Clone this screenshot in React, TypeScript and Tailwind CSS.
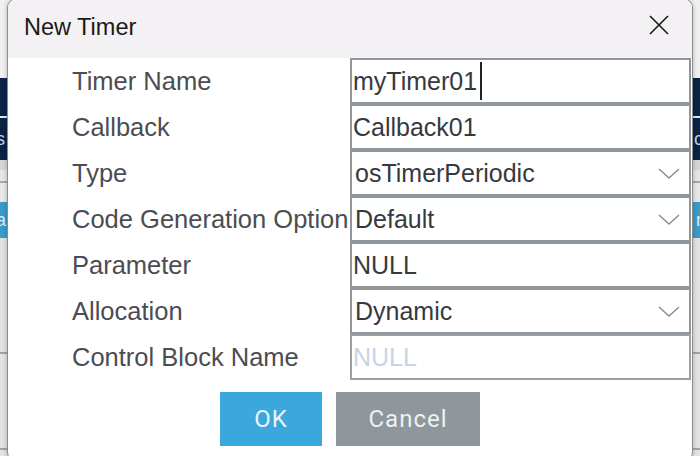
type Row = {
  label: string;
  value: string;
  select?: boolean;
  caret?: boolean;
  placeholder?: boolean;
};

const rows: Row[] = [
  { label: "Timer Name", value: "myTimer01", caret: true },
  { label: "Callback", value: "Callback01" },
  { label: "Type", value: "osTimerPeriodic", select: true },
  { label: "Code Generation Option", value: "Default", select: true },
  { label: "Parameter", value: "NULL" },
  { label: "Allocation", value: "Dynamic", select: true },
  { label: "Control Block Name", value: "NULL", placeholder: true },
];

function Backdrop() {
  // strips of the main window peeking out on both sides of the dialog
  return (
    <div className="flex flex-col h-[456px] w-[700px] bg-[#e9e9e9]">
      <div className="h-[78px] bg-[#f1f1f1]" />
      <div className="h-[38px] bg-[#0b2346]" />
      <div className="h-[2px] bg-[#dfe5ec]" />
      <div className="h-[42px] bg-[#0b2346] flex items-center justify-between text-[18px] text-[#c9d2de] font-['Liberation_Sans',Arial,sans-serif]">
        <span className="-ml-[4px]">s</span>
        <span className="-mr-[3px]">c</span>
      </div>
      <div className="h-[10px] bg-[#d5d5d5]" />
      <div className="h-[11px] bg-[#e6e6e6]" />
      <div className="h-[2px] bg-[#a9a9a9]" />
      <div className="h-[19px] bg-[#e8e8e8]" />
      <div className="h-[36px] bg-[#3a9ccb] flex items-center justify-between text-[18px] text-[#d8ecf6] font-['Liberation_Sans',Arial,sans-serif]">
        <span className="-ml-[4px]">a</span>
        <span className="-mr-[2px]">r</span>
      </div>
      <div className="h-[114px] bg-[#e3e3e3]" />
      <div className="h-[2px] bg-[#a3a3a3]" />
      <div className="h-[94px] bg-[#e3e3e3]" />
      <div className="h-[2px] bg-[#a3a3a3]" />
      <div className="flex-1 bg-[#e3e3e3]" />
    </div>
  );
}

function Chevron() {
  return (
    <svg width="22" height="11" viewBox="0 0 22 11" className="ml-auto" fill="none">
      <polyline points="1,1 11,10 21,1" stroke="#868b90" strokeWidth="1.4" />
    </svg>
  );
}

function Field({ row }: { row: Row }) {
  return (
    <div
      className={
        "h-[46px] flex items-center border-2 bg-white pr-[9px] " +
        (row.select ? "pl-[3px] " : "pl-[1px] ") +
        (row.placeholder ? "border-[#9aa0a5]" : "border-[#8f969c]")
      }
    >
      <span
        className={
          "text-[25px] leading-none " +
          (row.placeholder ? "text-[#c6d4e9]" : "text-[#363a40]")
        }
      >
        {row.value}
      </span>
      {row.caret && <span className="ml-[3px] w-[2px] h-[38px] bg-[#222]" />}
      {row.select && <Chevron />}
    </div>
  );
}

export default function App() {
  return (
    <div className="relative w-[700px] h-[456px] overflow-hidden font-['Liberation_Sans',Arial,sans-serif]">
      <Backdrop />

      <div className="absolute left-[7px] top-[-2px] w-[686px] h-[464px] bg-white border border-[#8c8c8c] rounded-[10px] overflow-hidden shadow-[0_0_5px_rgba(0,0,0,0.25)] flex flex-col">
        <div className="h-[59px] bg-[#f3f1f3] flex items-center justify-between pl-[16px] pr-[23px]">
          <span className="text-[23.5px] text-[#1a1a1a] -mt-[2px]">New Timer</span>
          <svg width="20" height="20" viewBox="0 0 20 20" className="-mt-[7px]" fill="none">
            <path d="M1 1 L19 19 M19 1 L1 19" stroke="#1a1a1a" strokeWidth="1.6" />
          </svg>
        </div>

        <div className="grid grid-cols-[342px_1fr] pr-[1px]">
          <div className="flex flex-col pl-[64px]">
            {rows.map((r) => (
              <div
                key={r.label}
                className="h-[46px] flex items-center text-[25.5px] text-[#4b4d52] whitespace-nowrap"
              >
                {r.label}
              </div>
            ))}
          </div>
          <div className="flex flex-col">
            {rows.map((r) => (
              <Field key={r.label} row={r} />
            ))}
          </div>
        </div>

        <div className="flex justify-center gap-[14px] mt-[12px] font-['Roboto','Liberation_Sans',sans-serif]">
          <button className="w-[102px] h-[54px] bg-[#3aa8dc] text-[24px] text-[#e9f5fb] tracking-[1px]">
            OK
          </button>
          <button className="w-[144px] h-[54px] bg-[#8f969c] text-[24px] text-[#eef0f1] tracking-[1px]">
            Cancel
          </button>
        </div>
      </div>
    </div>
  );
}
